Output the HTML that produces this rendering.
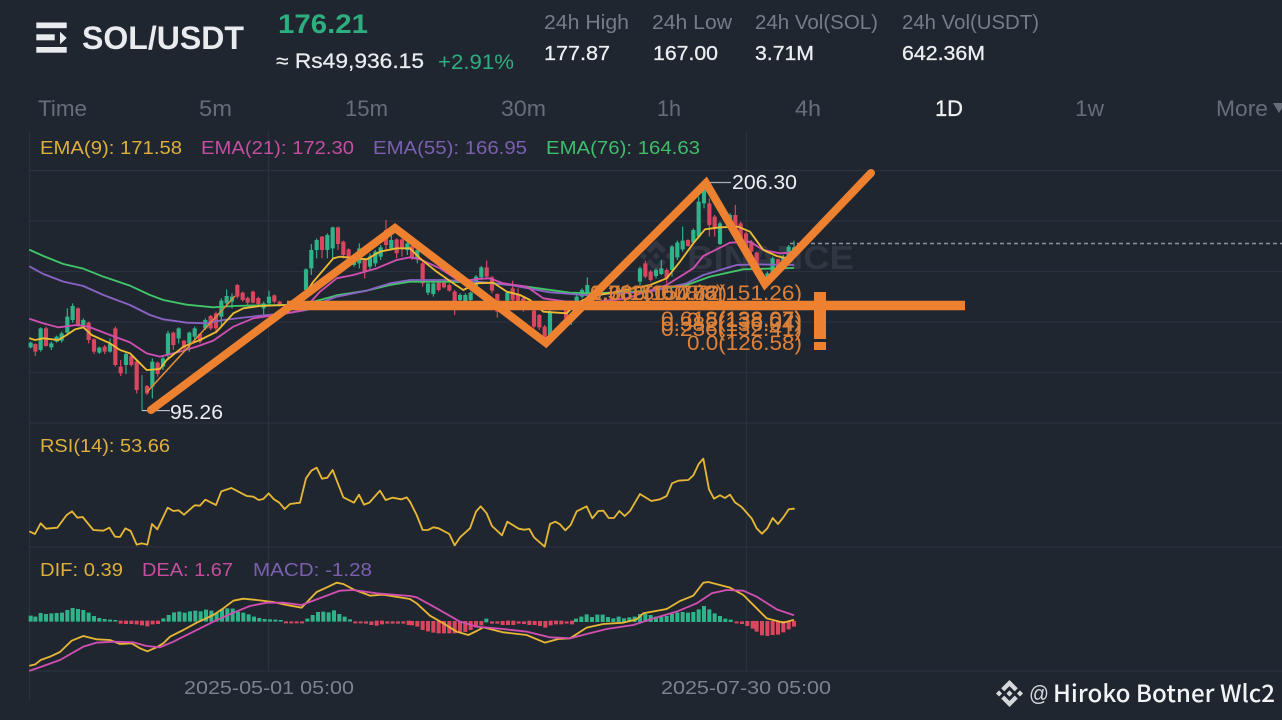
<!DOCTYPE html>
<html><head><meta charset="utf-8"><style>
html,body{margin:0;padding:0;background:#1f2630;width:1282px;height:720px;overflow:hidden}
svg{display:block;font-family:"Liberation Sans",sans-serif}
</style></head><body>
<svg width="1282" height="720" viewBox="0 0 1282 720" xmlns="http://www.w3.org/2000/svg">
<rect width="1282" height="720" fill="#1f2630"/>
<!-- grid -->
<g stroke="#2b323e" stroke-width="1.2" fill="none">
<path d="M29.5 131V700M268.5 131V671M746.5 131V671"/>
<path d="M30 170.5H1282M30 221H1282M30 271.5H1282M30 322H1282M30 372.5H1282M30 423H1282M30 547H1282M30 671H1282"/>
</g>
<!-- watermark -->
<g fill="#303743">
<g transform="translate(640,240) scale(.255)"><path d="M38.73 53.2l24.59-24.58 24.6 24.6 14.3-14.31L63.32 0 24.42 38.9zM0 63.31l14.3-14.31 14.31 14.31-14.31 14.3zM38.73 73.41l24.59 24.59 24.6-24.6 14.31 14.29-38.9 38.91-38.91-38.88zM98.28 63.31l14.3-14.31 14.31 14.3-14.31 14.32zM77.83 63.3l-14.51-14.52L52.59 59.51l-1.24 1.23-2.54 2.54 14.51 14.5 14.51-14.51z"/></g>
<text x="687" y="269" font-size="33" font-weight="700" textLength="167" lengthAdjust="spacingAndGlyphs">BINANCE</text>
</g>
<!-- header -->
<g fill="#e9ebef">
<rect x="36.3" y="22.5" width="30.4" height="5.7"/><rect x="36.3" y="34.3" width="18.4" height="6"/><rect x="36.3" y="47" width="30.4" height="5.7"/>
<path d="M60 31.7L66.7 38L60 44.3z"/>
</g>
<text x="82" y="49" font-size="32" font-weight="700" fill="#e9ebef" textLength="162" lengthAdjust="spacingAndGlyphs">SOL/USDT</text>
<text x="278" y="33" font-size="27" font-weight="700" fill="#2ead7f" textLength="90" lengthAdjust="spacingAndGlyphs">176.21</text>
<text x="276" y="68" font-size="21" fill="#e9ebef" stroke="#e9ebef" stroke-width=".25" textLength="148" lengthAdjust="spacingAndGlyphs">≈ Rs49,936.15</text>
<text x="438" y="69" font-size="21" fill="#2ead7f" textLength="76" lengthAdjust="spacingAndGlyphs">+2.91%</text>
<g font-size="20" fill="#767d89">
<text x="544" y="29" textLength="85" lengthAdjust="spacingAndGlyphs">24h High</text>
<text x="652" y="29" textLength="80" lengthAdjust="spacingAndGlyphs">24h Low</text>
<text x="755" y="29" textLength="123" lengthAdjust="spacingAndGlyphs">24h Vol(SOL)</text>
<text x="902" y="29" textLength="137" lengthAdjust="spacingAndGlyphs">24h Vol(USDT)</text>
</g>
<g font-size="20" fill="#eceef1" stroke="#eceef1" stroke-width=".3">
<text x="544" y="60" textLength="66" lengthAdjust="spacingAndGlyphs">177.87</text>
<text x="653" y="60" textLength="65" lengthAdjust="spacingAndGlyphs">167.00</text>
<text x="755" y="60" textLength="59" lengthAdjust="spacingAndGlyphs">3.71M</text>
<text x="902" y="60" textLength="83" lengthAdjust="spacingAndGlyphs">642.36M</text>
</g>
<!-- tabs -->
<g font-size="22" fill="#666e7a">
<text x="38" y="116" textLength="49" lengthAdjust="spacingAndGlyphs">Time</text>
<text x="199" y="116" textLength="33" lengthAdjust="spacingAndGlyphs">5m</text>
<text x="345" y="116" textLength="43" lengthAdjust="spacingAndGlyphs">15m</text>
<text x="501" y="116" textLength="45" lengthAdjust="spacingAndGlyphs">30m</text>
<text x="657" y="116" textLength="24" lengthAdjust="spacingAndGlyphs">1h</text>
<text x="795" y="116" textLength="26" lengthAdjust="spacingAndGlyphs">4h</text>
<text x="1075" y="116" textLength="29" lengthAdjust="spacingAndGlyphs">1w</text>
<text x="1216" y="116" textLength="52" lengthAdjust="spacingAndGlyphs">More</text>
</g>
<text x="935" y="116" font-size="22" fill="#f0f1f3" stroke="#f0f1f3" stroke-width=".3" textLength="28" lengthAdjust="spacingAndGlyphs">1D</text>
<path d="M1273 103H1285L1279 113z" fill="#666e7a"/>
<!-- legend -->
<g font-size="18">
<text x="40" y="154" fill="#dcb03a" textLength="142" lengthAdjust="spacingAndGlyphs">EMA(9): 171.58</text>
<text x="201" y="154" fill="#c44ea0" textLength="153" lengthAdjust="spacingAndGlyphs">EMA(21): 172.30</text>
<text x="373" y="154" fill="#7a60ae" textLength="154" lengthAdjust="spacingAndGlyphs">EMA(55): 166.95</text>
<text x="546" y="154" fill="#3fbd6b" textLength="154" lengthAdjust="spacingAndGlyphs">EMA(76): 164.63</text>
<text x="40" y="452" fill="#dcb03a" textLength="130" lengthAdjust="spacingAndGlyphs">RSI(14): 53.66</text>
<text x="40" y="576" fill="#dcb03a" textLength="83" lengthAdjust="spacingAndGlyphs">DIF: 0.39</text>
<text x="142" y="576" fill="#c44ea0" textLength="91" lengthAdjust="spacingAndGlyphs">DEA: 1.67</text>
<text x="253" y="576" fill="#7a60ae" textLength="119" lengthAdjust="spacingAndGlyphs">MACD: -1.28</text>
<text x="184" y="694" fill="#7b8390" textLength="170" lengthAdjust="spacingAndGlyphs">2025-05-01 05:00</text>
<text x="661" y="694" fill="#7b8390" textLength="170" lengthAdjust="spacingAndGlyphs">2025-07-30 05:00</text>
</g>
<!-- dashed price line -->
<path d="M790 243.5H1282" stroke="#8d939c" stroke-width="1.6" stroke-dasharray="4 3" fill="none"/>
<!-- candles left part -->
<g transform="translate(0,170) scale(.33333)" fill="none">
<path stroke="#2fb489" stroke-width="3.5" d="M92 515V535M122 472V545M154 515V540M170 497V518M185 485V518M202 415V490M218 400V458M250 445V470M298 530V552M330 505V548M378 545V612M457 565V685M489 560V600M504 483V570M536 472V520M568 485V545M584 470V510M616 445V480M664 385V470M680 358V410M696 370V415M791 395V435M807 362V405M918 295V365M934 222V315M950 205V265M982 190V265M998 170V270M1062 260V290M1078 220V295M1110 250V300M1126 240V290M1142 225V270M1174 190V240M1222 215V255"/>
<path stroke="#2fb489" stroke-width="12.5" d="M92 518V532M122 475V540M154 520V532M170 500V515M185 490V512M202 440V488M218 408V450M250 450V465M298 533V548M330 522V545M378 552V585M457 575V650M489 565V590M504 490V555M536 475V505M568 488V520M584 475V500M616 450V475M664 392V440M680 378V400M696 380V395M791 400V415M807 380V400M918 298V360M934 240V295M950 210V240M982 195V240M998 172V235M1062 265V285M1078 235V280M1110 260V290M1126 245V280M1142 232V260M1174 210V235M1222 220V240"/>
<path stroke="#d9475f" stroke-width="3.5" d="M106 520V558M138 470V530M234 412V470M266 455V520M282 505V552M314 525V552M346 470V590M362 570V618M394 555V590M410 570V670M441 645V675M473 575V620M520 485V540M552 510V548M600 490V520M632 435V480M648 425V490M712 342V385M728 365V395M743 380V405M759 362V400M775 380V410M823 373V400M839 392V410M966 198V265M1014 170V240M1030 212V265M1046 235V280M1094 265V325M1158 150V240M1190 205V265M1206 205V260"/>
<path stroke="#d9475f" stroke-width="12.5" d="M106 522V545M138 475V528M234 415V468M266 458V510M282 508V545M314 530V545M346 475V585M362 590V610M394 558V585M410 575V660M441 648V670M473 578V612M520 488V525M552 512V535M600 492V515M632 438V475M648 430V475M712 345V380M728 368V390M743 384V398M759 365V398M775 384V402M823 376V395M839 395V405M966 200V240M1014 172V222M1030 215V255M1046 238V265M1094 270V305M1158 180V225M1190 208V250M1206 208V235"/>
<path stroke="#2fb489" stroke-width="3" d="M426 615V722"/>
<path stroke="#d5d8dc" stroke-width="3" d="M426 722H510"/>
</g>
<!-- candles right part -->
<g transform="translate(410,170) scale(.33333)" fill="none">
<path stroke="#2fb489" stroke-width="3.5" d="M22 235V280M54 335V375M70 335V380M150 370V395M166 370V420M182 365V395M198 315V360M214 288V330M292 365V400M420 420V505M484 430V465M500 375V415M516 355V385M532 322V385M690 290V345M738 295V325M754 270V315M786 225V320M802 212V270M818 170V245M850 175V222M866 80V205M882 55V115M930 155V225M960 130V160M1072 305V335M1088 260V320M1120 255V295M1136 225V260M1152 212V250"/>
<path stroke="#2fb489" stroke-width="12.5" d="M22 240V265M54 340V368M70 340V372M150 375V390M166 375V410M182 368V390M198 320V350M214 292V322M292 368V392M420 428V498M484 435V455M500 380V410M516 360V380M532 345V378M690 295V335M738 300V318M754 295V312M786 230V300M802 218V262M818 212V238M850 180V218M866 95V200M882 60V100M930 160V222M960 135V155M1072 310V330M1088 265V312M1120 260V288M1136 230V255M1152 232V245"/>
<path stroke="#d9475f" stroke-width="3.5" d="M6 220V270M38 275V350M86 335V365M102 330V355M118 340V365M134 360V435M246 318V370M230 272V325M262 370V443M308 332V395M324 355V395M340 380V425M372 420V475M388 432V480M404 465V530M468 400V455M706 272V325M722 300V335M770 295V340M834 208V230M898 85V200M914 135V200M976 105V205M992 155V210M1008 185V245M1024 210V250M1040 245V320M1056 320V345M1104 265V300"/>
<path stroke="#d9475f" stroke-width="12.5" d="M6 228V262M38 280V340M86 338V360M102 338V352M118 345V362M134 365V415M230 292V320M246 322V362M262 372V425M308 355V390M324 375V392M340 385V410M372 422V470M388 435V472M404 470V505M468 405V445M706 280V320M722 305V330M770 300V325M834 210V228M898 100V165M914 140V172M976 135V195M992 160V205M1008 190V238M1024 215V245M1040 248V310M1056 322V340M1104 268V292"/>
</g>
<!-- EMA lines left -->
<g transform="translate(0,170) scale(.33333)" fill="none" stroke-width="5.5" stroke-linejoin="round" stroke-linecap="round">
<polyline stroke="#41c668" points="90,240 130,258 190,282 250,296 310,320 390,347 450,375 490,390 560,404 640,412 700,408 780,406 850,405 900,405 960,390 1010,376 1100,362 1170,345 1230,335"/>
<polyline stroke="#8a63c4" points="90,290 130,312 190,335 250,348 310,375 390,405 450,435 490,448 560,458 620,460 670,450 780,437 860,430 920,420 970,395 1010,380 1100,362 1170,340 1230,330"/>
<polyline stroke="#d04fb0" points="90,447 130,460 175,472 230,465 265,470 330,495 390,517 440,550 480,560 540,545 590,530 640,512 700,470 760,445 860,430 910,420 960,365 1010,325 1060,315 1130,295 1190,270 1230,262"/>
<polyline stroke="#ecbd33" points="90,505 105,510 130,505 175,510 200,495 225,478 250,472 275,495 330,520 360,540 390,550 415,575 440,600 480,597 500,570 550,530 600,510 650,485 700,430 730,415 780,408 860,405 900,395 940,335 1000,265 1020,260 1100,268 1140,245 1190,235 1230,235"/>
</g>
<!-- EMA lines right -->
<g transform="translate(410,170) scale(.33333)" fill="none" stroke-width="5.5" stroke-linejoin="round" stroke-linecap="round">
<polyline stroke="#41c668" points="0,335 100,335 220,337 350,350 480,368 560,370 720,362 830,345 900,320 1000,298 1150,294"/>
<polyline stroke="#8a63c4" points="0,330 100,330 200,335 300,345 420,367 520,375 720,365 830,340 880,315 980,285 1040,283 1150,285"/>
<polyline stroke="#d04fb0" points="0,262 30,268 90,295 150,335 200,327 240,325 280,340 350,350 400,385 470,395 560,395 650,385 770,345 850,295 880,258 960,218 1020,215 1060,240 1110,250 1150,247"/>
<polyline stroke="#ecbd33" points="0,235 30,265 80,305 130,340 160,360 200,340 250,338 290,365 330,375 360,390 400,425 470,430 500,400 540,380 620,365 720,345 770,325 810,275 850,220 885,178 930,172 985,170 1020,185 1060,240 1100,258 1130,265 1150,255"/>
</g>
<!-- thin orange -->
<path d="M147 392L235 296" stroke="#e08a3c" stroke-width="1.6" fill="none"/>
<!-- RSI -->
<g transform="translate(0,430) scale(.33333)" fill="none" stroke-width="5.5" stroke-linejoin="round" stroke-linecap="round">
<polyline stroke="#e6b635" points="90,305 105,312 122,280 138,296 172,293 200,255 216,244 232,263 248,261 280,300 310,302 328,293 345,320 360,321 376,295 392,303 410,344 425,340 442,344 456,282 472,298 503,233 520,243 536,241 552,254 584,226 600,227 616,209 648,225 664,184 694,174 740,198 760,200 776,210 790,207 806,190 822,208 838,218 854,237 870,222 900,218 918,145 934,122 950,113 966,146 982,143 998,120 1030,202 1062,218 1077,194 1092,224 1108,218 1140,182 1157,210 1178,203 1204,208 1220,202 1230,215"/>
</g>
<g transform="translate(410,430) scale(.33333)" fill="none" stroke-width="5.5" stroke-linejoin="round" stroke-linecap="round">
<polyline stroke="#e6b635" points="0,215 20,255 38,300 54,300 70,292 86,295 118,312 134,346 150,322 180,295 198,245 212,229 230,250 246,288 276,316 292,275 326,296 342,299 358,297 372,322 404,350 420,282 436,275 450,283 466,301 482,285 500,244 530,229 547,265 565,243 580,242 596,264 612,264 628,243 644,258 660,243 690,192 724,213 750,208 770,198 786,160 805,152 835,150 850,136 866,102 880,86 897,178 912,206 930,196 945,204 960,194 975,217 995,231 1025,265 1040,295 1056,311 1072,295 1088,264 1104,282 1120,262 1136,238 1152,236"/>
</g>
<!-- MACD histogram left -->
<g transform="translate(0,430) scale(.33333)" fill="none" stroke-width="12">
<path stroke="#2fb489" d="M92 575V557M106 575V560M122 575V549M138 575V552M154 575V550M170 575V549M186 575V548M202 575V540M218 575V534M234 575V537M250 575V540M266 575V548M282 575V558M298 575V564M314 575V567M330 575V569M346 575V570M490 575V565M506 575V555M522 575V547M538 575V545M554 575V548M570 575V544M586 575V542M602 575V544M618 575V539M634 575V542M650 575V549M666 575V538M682 575V535M698 575V536M714 575V545M730 575V548M746 575V553M762 575V560M778 575V564M794 575V567M810 575V568M826 575V569M842 575V570M922 575V566M938 575V555M954 575V546M970 575V545M986 575V547M1002 575V541M1018 575V552M1034 575V560M1050 575V568"/>
<path stroke="#d9475f" d="M362 572V581M378 572V582M394 572V582M410 572V583M426 572V586M442 572V589M458 572V583M474 572V582M858 574V580M874 574V580M890 574V580M906 574V580M1066 574V580M1082 574V580M1098 574V581M1114 574V585M1130 572V587M1146 572V583M1162 574V581M1178 574V581M1194 574V581M1210 574V581M1226 572V585"/>
</g>
<!-- MACD histogram right -->
<g transform="translate(410,430) scale(.33333)" fill="none" stroke-width="12">
<path stroke="#d9475f" d="M6 573V586M22 573V590M38 573V600M54 573V604M70 573V608M86 573V610M102 573V610M118 573V610M134 573V610M150 573V608M166 573V606M182 573V600M198 573V592M214 573V586M246 574V581M262 574V581M278 573V585M294 572V585M310 572V585M326 574V581M342 574V582M358 572V585M374 573V585M390 573V588M406 573V593M422 572V586M438 572V583M454 572V583M470 574V581M486 572V583M980 574V580M996 574V582M1012 573V588M1028 573V596M1040 573V605M1056 573V616M1072 573V618M1088 573V615M1104 573V614M1120 573V607M1136 573V598M1152 573V590"/>
<path stroke="#2fb489" d="M229 577V566M498 576V566M514 576V560M530 576V553M546 576V561M562 576V554M578 576V554M594 576V561M610 576V565M626 576V560M642 576V565M658 576V562M674 576V560M690 576V552M706 576V552M722 576V555M738 576V560M754 576V560M770 576V558M786 576V552M802 576V548M818 576V546M834 576V548M850 576V546M866 576V538M882 576V528M898 576V538M914 576V550M930 576V558M946 576V566M962 576V569"/>
</g>
<!-- MACD lines -->
<g transform="translate(0,430) scale(.33333)" fill="none" stroke-width="5.5" stroke-linejoin="round" stroke-linecap="round">
<polyline stroke="#e6b635" points="90,707 106,703 122,690 150,680 180,666 215,632 250,618 290,628 330,630 360,642 395,640 420,655 442,664 470,652 490,640 510,620 550,600 590,578 640,555 670,535 700,512 730,506 770,510 820,516 860,525 905,533 950,486 985,470 1010,458 1030,462 1060,478 1110,497 1150,494 1230,507"/>
<polyline stroke="#d04fb0" points="90,722 130,708 180,690 250,650 290,638 340,635 400,637 440,648 480,652 520,635 580,605 640,575 700,548 750,528 800,518 850,518 905,525 950,508 1020,482 1060,480 1130,490 1230,498"/>
</g>
<g transform="translate(410,430) scale(.33333)" fill="none" stroke-width="5.5" stroke-linejoin="round" stroke-linecap="round">
<polyline stroke="#e6b635" points="0,507 20,520 60,557 100,580 140,605 175,615 200,603 220,592 280,607 350,615 405,638 445,627 480,625 530,593 580,582 640,578 680,568 700,550 770,537 810,513 850,497 880,458 895,456 960,473 1000,495 1040,535 1070,565 1120,578 1150,570"/>
<polyline stroke="#d04fb0" points="0,498 20,502 80,535 150,575 200,590 280,597 350,605 420,622 480,625 530,612 590,597 670,585 730,565 800,545 860,520 905,490 950,480 1000,482 1040,500 1100,538 1150,555"/>
</g>
<!-- Fib labels -->
<g font-size="21" fill="#dd8038">
<text x="590" y="300" textLength="137" lengthAdjust="spacingAndGlyphs">0.786(150.72)</text>
<text x="590" y="300" textLength="133" lengthAdjust="spacingAndGlyphs">0.382(150.78)</text>
<text x="590" y="300" textLength="116" lengthAdjust="spacingAndGlyphs">1.0(150.78)</text>
<text x="661" y="300" textLength="141" lengthAdjust="spacingAndGlyphs">0.786(151.26)</text>
<text x="661" y="326" textLength="141" lengthAdjust="spacingAndGlyphs">0.618(138.07)</text>
<text x="687" y="327" textLength="115" lengthAdjust="spacingAndGlyphs">0.5(138.02)</text>
<text x="661" y="331" textLength="141" lengthAdjust="spacingAndGlyphs">0.382(136.04)</text>
<text x="661" y="336" textLength="141" lengthAdjust="spacingAndGlyphs">0.236(132.41)</text>
<text x="687" y="350" textLength="115" lengthAdjust="spacingAndGlyphs">0.0(126.58)</text>
</g>
<!-- price labels -->
<path d="M706 182.5H731" stroke="#aab0b8" stroke-width="1.2"/>
<text x="732" y="189" font-size="20" fill="#eceef1" textLength="65" lengthAdjust="spacingAndGlyphs">206.30</text>
<text x="170" y="419" font-size="20" fill="#eceef1" textLength="53" lengthAdjust="spacingAndGlyphs">95.26</text>
<!-- orange drawing -->
<g fill="none" stroke="#ee8130" stroke-linejoin="miter">
<path d="M287 305.5H965" stroke-width="9.5"/>
<polyline stroke-width="8" stroke-linecap="round" stroke-miterlimit="10" points="151,410 395,228 546,343 706,183 765,284 871,173"/>
</g>
<rect x="814" y="292" width="12" height="47" fill="#ee8130"/>
<rect x="814" y="342" width="12" height="8" fill="#ee8130"/>
<!-- footer watermark -->
<g transform="translate(996,680) scale(.213)" fill="#d6d8da"><path d="M38.73 53.2l24.59-24.58 24.6 24.6 14.3-14.31L63.32 0 24.42 38.9zM0 63.31l14.3-14.31 14.31 14.31-14.31 14.3zM38.73 73.41l24.59 24.59 24.6-24.6 14.31 14.29-38.9 38.91-38.91-38.88zM98.28 63.31l14.3-14.31 14.31 14.3-14.31 14.32zM77.83 63.3l-14.51-14.52L52.59 59.51l-1.24 1.23-2.54 2.54 14.51 14.5 14.51-14.51z"/></g>
<text x="1029" y="701" font-size="22" fill="#d6d8da" style='font-family:"Liberation Sans","Noto Sans CJK JP",sans-serif' textLength="20" lengthAdjust="spacingAndGlyphs">@</text>
<text x="1053" y="702" font-size="24" font-weight="500" fill="#f2f3f5" style='font-family:"Noto Sans CJK JP","Liberation Sans",sans-serif' textLength="222" lengthAdjust="spacingAndGlyphs">Hiroko Botner Wlc2</text>
</svg>
</body></html>
